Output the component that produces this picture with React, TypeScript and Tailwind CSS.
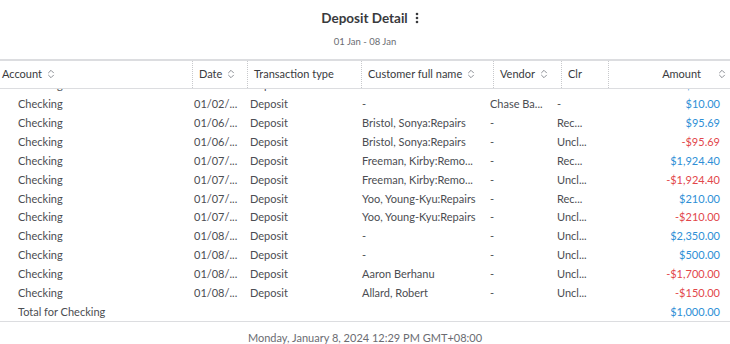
import React from "react";

const SortIcon = () => (
  <svg width="8" height="10" viewBox="0 0 8 10" className="inline-block ml-[5px] -mt-[2px]" fill="none" stroke="#8d9096" strokeWidth="1" strokeLinecap="round" strokeLinejoin="round">
    <path d="M1.5 3.8 L4 1.3 L6.5 3.8" />
    <path d="M1.5 6.2 L4 8.7 L6.5 6.2" />
  </svg>
);

type Row = { date: string; cust: string; vendor: string; clr: string; amt: string; neg: boolean };

const rows: Row[] = [
  { date: "01/02/...", cust: "-", vendor: "Chase Ba...", clr: "-", amt: "$10.00", neg: false },
  { date: "01/06/...", cust: "Bristol, Sonya:Repairs", vendor: "-", clr: "Rec...", amt: "$95.69", neg: false },
  { date: "01/06/...", cust: "Bristol, Sonya:Repairs", vendor: "-", clr: "Uncl...", amt: "-$95.69", neg: true },
  { date: "01/07/...", cust: "Freeman, Kirby:Remo...", vendor: "-", clr: "Rec...", amt: "$1,924.40", neg: false },
  { date: "01/07/...", cust: "Freeman, Kirby:Remo...", vendor: "-", clr: "Uncl...", amt: "-$1,924.40", neg: true },
  { date: "01/07/...", cust: "Yoo, Young-Kyu:Repairs", vendor: "-", clr: "Rec...", amt: "$210.00", neg: false },
  { date: "01/07/...", cust: "Yoo, Young-Kyu:Repairs", vendor: "-", clr: "Uncl...", amt: "-$210.00", neg: true },
  { date: "01/08/...", cust: "-", vendor: "-", clr: "Uncl...", amt: "$2,350.00", neg: false },
  { date: "01/08/...", cust: "-", vendor: "-", clr: "Uncl...", amt: "$500.00", neg: false },
  { date: "01/08/...", cust: "Aaron Berhanu", vendor: "-", clr: "Uncl...", amt: "-$1,700.00", neg: true },
  { date: "01/08/...", cust: "Allard, Robert", vendor: "-", clr: "Uncl...", amt: "-$150.00", neg: true },
];

const BodyRow = ({ r }: { r: Row }) => (
  <div className="flex h-[18.9px] items-center whitespace-nowrap">
    <div className="w-[194px] pl-[18px]">Checking</div>
    <div className="w-[56px]">{r.date}</div>
    <div className="w-[112px]">Deposit</div>
    <div className="w-[128px]">{r.cust}</div>
    <div className="w-[67px]">{r.vendor}</div>
    <div className="w-[63px]">{r.clr}</div>
    <div className={`w-[100px] text-right ${r.neg ? "text-[#e2474b]" : "text-[#2e8fd6]"}`}>{r.amt}</div>
  </div>
);

export default function App() {
  return (
    <div className="w-[730px] h-[344px] bg-white overflow-hidden text-[11px] text-[#4b4d52]" style={{ fontFamily: "Lato, 'Noto Sans', sans-serif" }}>
      <div className="h-[59px] flex flex-col items-center">
        <div className="mt-[9px] flex items-center text-[13.5px] font-bold text-[#393a3d] leading-[18px]">
          <span className="ml-[10px]">Deposit Detail</span>
          <svg width="4" height="12" viewBox="0 0 4 12" className="ml-[7px]" fill="#393a3d">
            <circle cx="2" cy="2" r="1.3" />
            <circle cx="2" cy="6" r="1.3" />
            <circle cx="2" cy="10" r="1.3" />
          </svg>
        </div>
        <div className="mt-[9px] text-[9.5px] text-[#6b6c72] leading-[12px]">01 Jan - 08 Jan</div>
      </div>
      <div className="flex h-[30px] border-t-2 border-b border-[#dcdde0] items-center text-[#393a3d] whitespace-nowrap">
        <div className="w-[193px] h-full flex items-center pl-[2px] border-r border-dotted border-[#c8c9cc]">Account<SortIcon /></div>
        <div className="w-[55px] h-full flex items-center pl-[6px] border-r border-dotted border-[#c8c9cc]">Date<SortIcon /></div>
        <div className="w-[114px] h-full flex items-center pl-[6px] border-r border-dotted border-[#c8c9cc]">Transaction type</div>
        <div className="w-[132px] h-full flex items-center pl-[6px] border-r border-dotted border-[#c8c9cc]">Customer full name<SortIcon /></div>
        <div className="w-[68px] h-full flex items-center pl-[6px] border-r border-dotted border-[#c8c9cc]">Vendor<SortIcon /></div>
        <div className="w-[47px] h-full flex items-center pl-[6px] border-r border-dotted border-[#c8c9cc]">Clr</div>
        <div className="flex-1 h-full flex items-center justify-end pr-[4px]">
          <span>Amount</span>
          <span className="ml-[12px]"><SortIcon /></span>
        </div>
      </div>
      <div className="h-[233px] overflow-hidden border-b border-[#dcdde0]">
        <div className="-mt-[13px]">
          <BodyRow r={rows[0]} />
          {rows.map((r, i) => (
            <BodyRow key={i} r={r} />
          ))}
          <div className="flex h-[18.9px] items-center whitespace-nowrap">
            <div className="w-[620px] pl-[18px]">Total for Checking</div>
            <div className="w-[100px] text-right text-[#2e8fd6]">$1,000.00</div>
          </div>
        </div>
      </div>
      <div className="pt-[9px] leading-[14px] text-center text-[#6b6c72] text-[11px]">
        Monday, January 8, 2024 12:29 PM GMT+08:00
      </div>
    </div>
  );
}
